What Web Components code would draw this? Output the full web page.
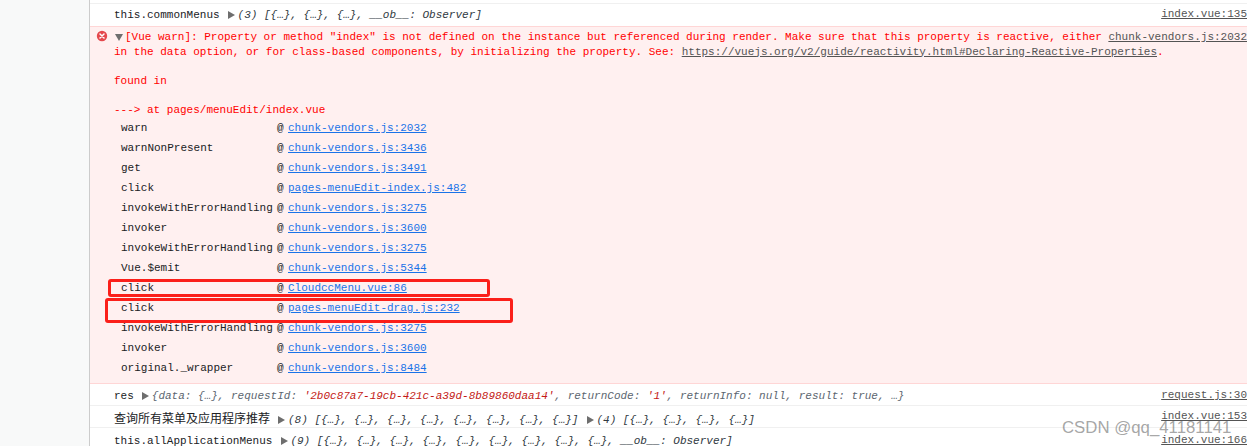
<!DOCTYPE html>
<html><head><meta charset="utf-8"><style>
html,body{margin:0;height:446px;overflow:hidden;background:#fff}
body{font:11px/14.5px "Liberation Mono",monospace}
</style></head><body>
<console-app>
  <console-log src="index.vue:135" style="--h:23px;--pt:3px;--ti:1px">this.commonMenus <obj-preview>(3) [{…}, {…}, {…}, __ob__: Observer]</obj-preview></console-log>
  <console-error></console-error>
  <console-log src="request.js:30" style="--h:21px;--pt:4px;--ti:1px;border-top:0">res <obj-preview style="color:#5c6670">{data: {…}, requestId: <span style="color:#c41a16">'2b0c87a7-19cb-421c-a39d-8b89860daa14'</span>, returnCode: <span style="color:#c41a16">'1'</span>, returnInfo: null, result: true, …}</obj-preview></console-log>
  <console-log src="index.vue:153" style="--h:22px;--pt:3px;--ti:2px"><span style="font:12px/14.5px 'Noto Sans CJK SC',sans-serif">查询所有菜单及应用程序推荐</span> <obj-preview>(8) [{…}, {…}, {…}, {…}, {…}, {…}, {…}, {…}]</obj-preview> <obj-preview>(4) [{…}, {…}, {…}, {…}]</obj-preview></console-log>
  <console-log src="index.vue:166" style="--h:19px;--pt:5px;--ti:1px">this.allApplicationMenus <obj-preview>(9) [{…}, {…}, {…}, {…}, {…}, {…}, {…}, {…}, {…}, __ob__: Observer]</obj-preview></console-log>
</console-app>
<script>
function el(tag,html){
  customElements.define(tag,class extends HTMLElement{
    constructor(){super();this.attachShadow({mode:'open'}).innerHTML=typeof html==='function'?html(this):html;}
  });
}
el('obj-preview',`<style>:host{display:inline;font-style:italic;color:#303942}
.t{display:inline-block;width:0;height:0;border-left:7px solid #6e6e6e;border-top:4px solid transparent;border-bottom:4px solid transparent;margin:0 2.6px 0 1.8px;vertical-align:-0.5px}
</style><span class="t"></span><slot></slot>`);
el('console-log',h=>`<style>:host{display:flex;justify-content:space-between;box-sizing:border-box;height:var(--h);padding:var(--pt) 0 0 24px;border-top:1px solid #f0f0f0;color:#202124;white-space:pre}
.m{margin-top:var(--ti)}
.s{color:#545454;text-decoration:underline;flex:none}
</style><div class="m"><slot></slot></div><div class="s">${h.getAttribute('src')}</div>`);
el('stack-row',h=>`<style>:host{display:grid;grid-template-columns:156px 11px auto;height:20px;line-height:20px;color:#202124;white-space:pre;justify-content:start}
a{color:#1a73e8;text-decoration:underline}
</style><span>${h.getAttribute('n')}</span><span>@</span><a>${h.getAttribute('l')}</a>`);
const rows=[['warn','chunk-vendors.js:2032'],['warnNonPresent','chunk-vendors.js:3436'],['get','chunk-vendors.js:3491'],['click','pages-menuEdit-index.js:482'],['invokeWithErrorHandling','chunk-vendors.js:3275'],['invoker','chunk-vendors.js:3600'],['invokeWithErrorHandling','chunk-vendors.js:3275'],['Vue.$emit','chunk-vendors.js:5344'],['click','CloudccMenu.vue:86'],['click','pages-menuEdit-drag.js:232'],['invokeWithErrorHandling','chunk-vendors.js:3275'],['invoker','chunk-vendors.js:3600'],['original._wrapper','chunk-vendors.js:8484']];
el('console-error',`<style>:host{display:block;position:relative;box-sizing:border-box;height:358px;background:#fff0f0;border-top:1px solid #ffd6d6;border-bottom:1px solid #ffd6d6;padding:3px 0 0 24px;color:#f00}
svg{position:absolute;left:6px;top:3px}
.tri{display:inline-block;width:0;height:0;border-top:7px solid #6e6e6e;border-left:4px solid transparent;border-right:4px solid transparent;margin:0 2px 0 1px;vertical-align:-1px}
.l1{display:flex;justify-content:space-between;white-space:pre}
.src,a{color:#545454;text-decoration:underline}
.msg{height:88px;white-space:pre}
.stack{padding-left:7px}
</style><svg width="12" height="12" viewBox="0 0 12 12"><circle cx="6" cy="6" r="5.2" fill="#e5484d"/><path d="M4 4l4 4M8 4l-4 4" stroke="#fff" stroke-width="1.5" stroke-linecap="round"/></svg><div class="msg"><div class="l1"><span><span class="tri"></span>[Vue warn]: Property or method "index" is not defined on the instance but referenced during render. Make sure that this property is reactive, either</span><span class="src">chunk-vendors.js:2032</span></div><div>in the data option, or for class-based components, by initializing the property. See: <a>https://vuejs.org/v2/guide/reactivity.html#Declaring-Reactive-Properties</a>.</div><div>&nbsp;</div><div>found in</div><div>&nbsp;</div><div>---&gt; at pages/menuEdit/index.vue</div></div><div class="stack">${rows.map(r=>`<stack-row n="${r[0]}" l="${r[1]}"></stack-row>`).join('')}</div>`);
el('red-box',`<style>:host{position:absolute;box-sizing:border-box;border:3px solid #fb1f1a;border-radius:3px}</style>`);
el('water-mark',`<style>:host{position:absolute;left:1062px;top:418px;font:16.8px/20px "Liberation Sans",sans-serif;color:rgba(110,110,110,.62);white-space:pre}</style><slot></slot>`);
el('console-app',`<style>:host{display:flex;height:446px;position:relative}
.side{width:89px;flex:none;background:#f8f9f9;border-right:1px solid #ccc}
.main{flex:1;min-width:0;padding-top:3px}
</style><div class="side"></div><div class="main"><slot></slot></div>
<red-box style="left:108px;top:279px;width:382px;height:18px"></red-box>
<red-box style="left:105px;top:298px;width:408px;height:25px"></red-box>
<water-mark>CSDN @qq_41181141</water-mark>`);
</script>
</body></html>
